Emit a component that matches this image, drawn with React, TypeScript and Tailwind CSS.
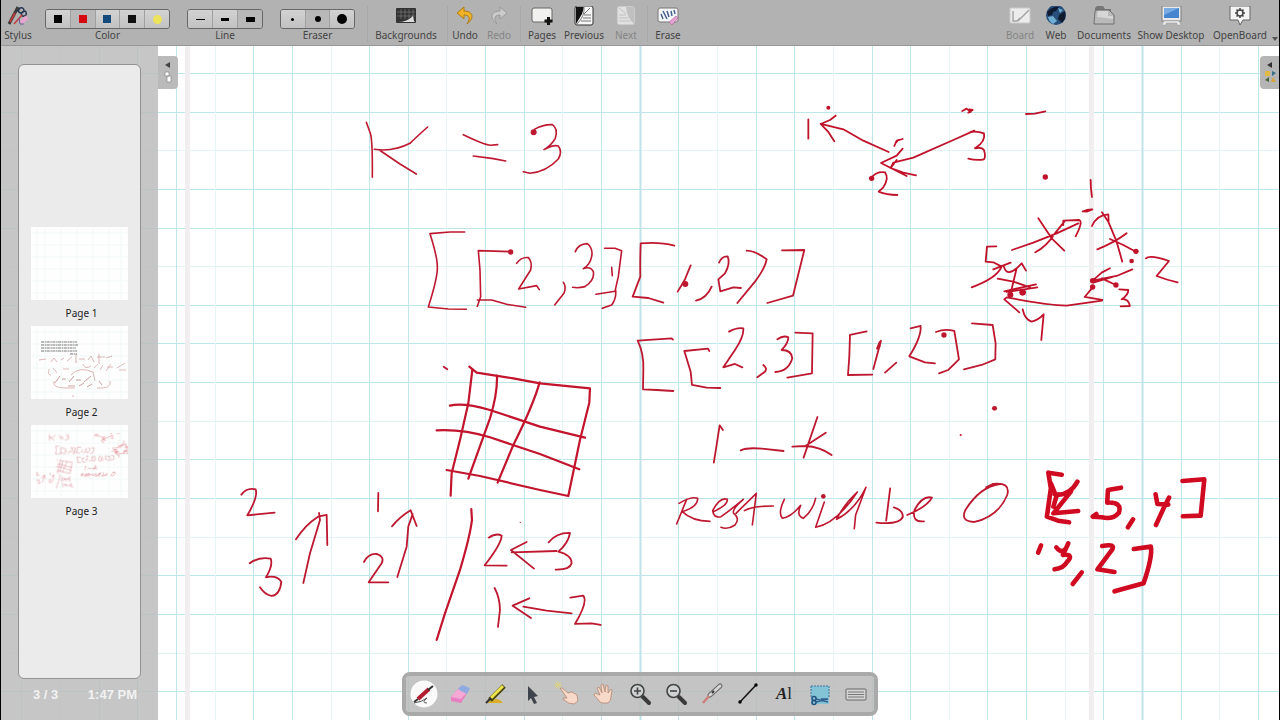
import React, { useState } from 'react';

interface StrokeGroup {
  transform: string;
  width: number;
  color: string;
  paths: string[];
  dots?: [number, number, number][];
}

const RED = '#bd1830';
const THIRD = 0.3333;

const ink: StrokeGroup[] = [
  {
    transform: `translate(340 90) scale(${THIRD})`,
    width: 1.6,
    color: RED,
    paths: [
      'M79 97L92 133Q98 160 97 262M263 111Q225 145 210 160Q160 186 103 178M118 180L180 222L229 252',
      'M370 134Q430 163 452 166L473 164M400 198L460 206L497 213',
      'M583 118Q610 103 637 104Q655 115 646 145Q635 165 612 179Q640 163 655 168Q668 185 655 207Q620 245 570 250L550 245',
      'M374 426L330 426L270 431Q292 500 292 530Q294 560 265 651L325 657L379 658',
      'M512 485L415 482L420 540L422 620L412 649M412 630L455 630L500 643L557 652',
      'M530 520Q545 500 565 503Q578 515 572 540L536 597L590 587L598 599M670 577Q680 590 672 610L644 645',
      'M706 485Q715 462 742 461Q760 475 755 500Q750 525 730 536Q752 528 760 545Q765 570 735 590Q715 595 698 592',
      'M794 475L825 475L845 482L835 560L825 604L768 613M827 600Q830 625 815 645L787 655M815 532L817 557',
    ],
    dots: [[581, 127, 9], [512, 486, 8]],
  },
  {
    transform: `translate(620 230) scale(${THIRD})`,
    width: 1.8,
    color: RED,
    paths: [
      'M163 47Q120 35 62 40Q60 100 61 140L38 200L85 204L130 218M212 106L194 150L173 185M275 170Q260 205 228 212',
      'M297 98Q305 78 323 79Q332 100 315 130L295 148L301 184L340 172L363 174',
      'M380 62Q405 62 440 88Q435 115 405 155L352 219M486 61L553 60L519 197L442 219',
      'M159 329L155 325L53 332Q72 370 70 420L69 478L110 480L160 483M268 363L264 356L193 363L212 425L216 465L260 473L301 474',
      'M327 305Q350 292 370 295Q372 320 345 360L310 412L345 402L367 412M430 405Q443 415 435 425L412 442',
      'M472 328Q490 315 505 322Q505 340 485 360Q515 360 517 385Q505 425 466 426M526 308L578 310L576 430L502 443',
      'M740 304L690 315L688 380L684 435L757 434M783 332L760 417M779 336L771 356L780 348M829 398L795 428',
      'M872 295L902 288Q905 320 868 379L915 397L945 400M948 306Q975 295 1003 303L1010 345L1017 388L985 420L957 430',
      'M1056 280L1118 285L1127 340L1126 388L1085 405L1032 418',
    ],
    dots: [[196, 162, 9], [972, 315, 8]],
  },
  {
    transform: `translate(780 90) scale(${THIRD})`,
    width: 1.8,
    color: '#c0122a',
    paths: [
      'M85 88L85 146M326 186L250 152L190 118L122 102L150 90L167 77M122 102L145 126L163 154',
      'M583 122L520 150L400 203L340 218L332 234L370 248L408 256M332 234L350 210M368 176L350 197L303 219L380 258M343 168L350 152L368 147M346 160L355 150',
      'M275 262Q290 243 315 247Q328 265 310 292L296 305Q320 315 352 315',
      'M572 126Q590 122 612 130Q618 155 585 175Q605 170 612 180Q618 200 612 208Q590 212 565 206',
      'M547 63L560 56L572 66L565 68L578 60L568 58M738 72L765 71L796 64M932 270L933 295L936 321M908 364L920 365L937 358L920 360L910 365',
      'M696 480L760 458L830 430L895 400M850 405L850 392L898 390Q910 395 887 439M775 385L815 445L853 482M766 487Q800 470 825 430L853 395',
      'M1027 515L1010 455L985 395L966 367M936 408Q950 375 985 373L986 393M952 478Q1000 460 1040 430M990 447L1030 465L1065 484',
      'M1098 505Q1110 493 1167 513L1130 558Q1160 570 1193 577',
      'M649 469L621 470L617 515L640 517L665 530Q650 565 575 592M640 538L692 518M672 530Q680 560 710 535L690 618M710 535L725 520L738 542',
      'M653 566L700 575L750 592M673 604L768 583M680 606L772 592M966 632L860 647Q800 645 680 622L673 628L718 667',
      'M967 630L914 621L940 590M1057 538L1010 558L938 572L965 548L990 535M965 565L1008 585M940 578L1000 560',
      'M1018 598L1045 600Q1045 615 1025 628Q1045 625 1050 648L1022 649M728 658Q735 690 755 695Q775 690 791 673L784 750',
    ],
    dots: [[145, 53, 6], [275, 265, 8], [796, 261, 8], [1068, 484, 8], [1055, 513, 7], [938, 572, 8], [938, 591, 8], [1008, 585, 8], [728, 607, 10], [691, 614, 9]],
  },
  {
    transform: `translate(230 350) scale(${THIRD})`,
    width: 1.8,
    color: RED,
    paths: [
      'M34 434Q50 412 77 418Q85 440 52 496L134 488M59 640Q85 620 122 626Q130 645 108 682Q140 675 154 695Q150 735 125 738Q105 735 90 712',
      'M220 699L240 610L270 510L267 489M198 568Q225 525 264 500L290 495L292 585M445 429L444 484',
      'M402 636Q415 610 440 612Q465 620 455 640L416 697L475 697M502 681L530 590L535 530L548 492M486 529Q510 500 542 481L560 528',
      'M776 563Q800 548 815 557Q815 580 764 646L830 647M980 603L845 607M890 576L843 600L912 656',
      'M956 577Q980 548 1020 549Q1015 580 985 605Q1025 615 1025 640Q1020 660 977 659',
      'M794 714Q810 745 810 780L804 831M1025 790L950 782L880 770M898 745L848 767L903 804M1021 743L1060 737Q1075 755 1035 822L1085 820L1112 825',
      'M641 50L652 58',
    ],
    dots: [[871, 517, 2]],
  },
  {
    transform: `translate(230 350) scale(${THIRD})`,
    width: 2.2,
    color: '#c2142c',
    paths: [
      'M718 50L740 68L850 85L930 100L1080 115L1078 158L1050 270L1015 438L930 420L750 378L650 360',
      'M727 60L715 160L690 270L665 370L662 437M801 77Q803 130 780 205L715 386M929 97Q910 165 850 285L803 398',
      'M660 167Q700 157 780 180L930 230L1065 263M620 241Q700 237 780 262L930 312L1048 358',
      'M724 477L726 510Q720 560 690 660L645 790L620 870',
    ],
  },
  {
    transform: `translate(665 470) scale(${THIRD})`,
    width: 1.6,
    color: RED,
    paths: [
      'M65 88L35 162M42 100Q80 78 98 85Q100 110 52 125Q80 153 135 154',
      'M145 125Q190 105 187 88Q165 80 143 122Q145 145 168 140Q190 125 235 88Q200 118 206 130Q226 145 210 165Q188 180 168 172',
      'M213 130L274 70L262 165M238 122Q262 108 325 108',
      'M358 88Q338 128 352 145Q380 140 407 106Q393 138 415 145Q445 120 452 85',
      'M478 96L452 172Q515 160 577 66Q535 105 515 148Q570 120 603 52L572 135L568 176',
    ],
    dots: [[475, 79, 7]],
  },
  {
    transform: `translate(660 400) scale(0.3636 ${THIRD})`,
    width: 1.8,
    color: RED,
    paths: [
      'M173 90L164 76L155 140L148 188M222 151Q240 142 280 146L340 153M433 51L395 173M456 98L400 138L364 140L400 138Q440 140 472 165',
      'M633 265L622 362M595 368Q660 375 668 350Q668 330 643 322M680 345Q735 320 748 293Q722 285 700 330Q692 368 726 364',
      'M935 252Q880 260 840 330Q825 365 865 366Q930 350 955 285Q965 245 915 252L897 262',
    ],
    dots: [[920, 25, 7], [827, 105, 3]],
  },
];

const boldInk: StrokeGroup = {
  transform: `translate(660 400) scale(0.3636 ${THIRD})`,
  width: 4.6,
  color: '#d00a20',
  paths: [
    'M1105 224L1068 218L1075 265L1064 350L1095 362L1125 367',
    'M1148 245Q1125 290 1085 283M1130 275L1082 340L1150 333M1075 250L1090 290L1082 320',
    'M1268 263L1232 270L1230 308Q1272 305 1262 338Q1245 360 1215 352L1190 350L1200 342M1301 358L1287 382',
    'M1363 283L1368 312L1398 314M1400 293L1385 325L1364 375M1437 243L1497 238L1487 347L1438 349',
    'M1048 436L1040 458M1090 442Q1110 470 1123 430L1108 465Q1140 462 1120 485Q1110 505 1085 508M1160 517L1135 552',
    'M1216 438Q1255 430 1243 450L1203 508L1250 516M1303 447L1350 440Q1355 470 1330 550L1250 574',
  ],
};

const Ink: React.FC<{ groups: StrokeGroup[]; strokeWidth?: number }> = ({ groups, strokeWidth }) => (
  <>
    {groups.map((g, i) => (
      <g key={i} transform={g.transform} stroke={g.color} strokeWidth={strokeWidth ?? g.width} fill="none" strokeLinecap="round" strokeLinejoin="round">
        {g.paths.map(d => (
          <path key={d} d={d} vectorEffect="non-scaling-stroke" />
        ))}
        {g.dots?.map(([x, y, r]) => (
          <circle key={`${x}-${y}`} cx={x} cy={y} r={r} fill={g.color} stroke="none" />
        ))}
      </g>
    ))}
  </>
);

const CELL = 38.64;
const columns = Array.from({ length: 60 }, (_, i) => i - 4);
const rows = Array.from({ length: 40 }, (_, i) => i);
const strongColumns = [12, 25, 38];
const faintColumns = [-3, 1, 4, 7, 10, 14, 17, 20, 23, 27];
const faintRows = [2, 5, 9, 12, 15];

const columnColor = (i: number) => {
  if (strongColumns.includes(i)) return '#bfe3e8';
  return faintColumns.includes(i) ? '#e6f5f6' : '#bfe7ea';
};

const Grid = () => (
  <g>
    {rows.map(i => {
      const y = Math.round(73 + i * CELL) + 0.5;
      return <line key={i} x1="0" x2="4000" y1={y} y2={y} stroke={faintRows.includes(i) ? '#e2f3f5' : '#bde6ea'} />;
    })}
    {columns.map(i => {
      const x = Math.round(176 + i * CELL) + 0.5;
      return <line key={i} y1="0" y2="3000" x1={x} x2={x} stroke={columnColor(i)} strokeWidth={strongColumns.includes(i) ? 2 : 1} />;
    })}
    <rect x="185" width="5" height="3000" fill="#f0eeef" />
    <rect x="1089" width="5" height="3000" fill="#f0eeef" />
  </g>
);

const icons: Record<string, React.ReactNode> = {
  Stylus: (
    <>
      <path d="M2 18L11 1" stroke="#3b3b3b" strokeWidth="3" />
      <path d="M3 16L8 7" stroke="#b43b3b" strokeWidth="2" />
      <path d="M13 2Q17 1 17 5Q14 9 11 5ZM17 5Q20 5 19 9Q15 12 14 7Z" fill="none" stroke="#24344f" strokeWidth="1.5" />
      <path d="M14 17L20 11" stroke="#e8a3ce" strokeWidth="4" />
      <path d="M7 18L15 9" stroke="#c23a3e" strokeWidth="1.5" />
      <path d="M12 12L13 18L17 18" fill="none" stroke="#665f98" />
    </>
  ),
  Backgrounds: (
    <>
      <rect x="1" y="2" width="20" height="15" rx="1" fill="#333" />
      <path d="M2 6H20M2 10H20M6 3V13M10 3V13M14 3V13M18 3V13" stroke="#777" strokeWidth=".7" />
      <path d="M3 16Q12 16 18 10L19 15L20 16Z" fill="#ddd" />
    </>
  ),
  Undo: <path d="M3 7L10 1V5C19 5 21 12 13 18C17 12 15 9 10 9V13Z" fill="#efb126" stroke="#ad7a14" strokeLinejoin="round" />,
  Redo: <path d="M19 7L12 1V5C3 5 1 12 9 18C5 12 7 9 12 9V13Z" fill="#cbcbcb" stroke="#999" strokeLinejoin="round" />,
  Pages: (
    <>
      <rect x="1" y="2" width="20" height="14" rx="2" fill="#f1f1ef" stroke="#666" />
      <path d="M17.500 11V19M13.500 15H21.500" stroke="#111" strokeWidth="3" />
    </>
  ),
  Previous: (
    <>
      <rect x="2" y="0" width="18" height="19" rx="2" fill="#f6f6f6" stroke="#333" />
      <path d="M3 1H11L9 8L3 18Z" fill="#111" />
      <path d="M11 1Q12 10 4 18M11 8L17 2M11 9L18 9M10 12H18M8 15H18" stroke="#777" fill="none" />
    </>
  ),
  Next: (
    <>
      <rect x="2" y="0" width="18" height="19" rx="2" fill="#e0e0e0" stroke="#b5b5b5" />
      <path d="M11 1H19V18Q12 12 11 1Z" fill="#c0c0c0" />
      <path d="M4 2L11 8M4 9H11M4 12H13M4 15H15" stroke="#c2c2c2" fill="none" />
    </>
  ),
  Erase: (
    <>
      <rect x="1" y="2" width="20" height="14" rx="2" fill="#f5f5f8" stroke="#777" />
      <path d="M4 8L6 13M6 5L10 13M10 5L12 11M14 5L15 10M17 4L18 8" stroke="#45618d" strokeWidth="1.500" />
      <path d="M12 16L19 10L21 12L15 19Z" fill="#e6a1d3" stroke="#a76698" strokeWidth=".6" />
    </>
  ),
  Board: (
    <>
      <rect x="1" y="2" width="20" height="15" rx="1" fill="#ececec" stroke="#c9c9c9" />
      <path d="M10 14L20 4M10 14L8 15L11 12M4 5V15H8" stroke="#a5a5a5" strokeWidth="1.500" fill="none" />
    </>
  ),
  Web: (
    <>
      <circle cx="11" cy="9" r="10" fill="#294e7a" />
      <path d="M2 6Q8 0 14 1L11 5L8 6L7 9L3 10ZM14 9L20 5Q22 12 17 17L13 13Z" fill="#101b30" />
      <path d="M3 11L8 10L12 15L8 18Q4 16 3 11ZM13 2L18 4L15 7Z" fill="#6faed2" />
    </>
  ),
  Documents: (
    <>
      <path d="M2 2L4 0H10L12 3H18V16H2Z" fill="#777" />
      <path d="M4 4H16L21 9V18H1L2 5Z" fill="#b9b9b9" stroke="#707070" />
      <path d="M5 5H15V10H20V13L4 11Z" fill="#d6d6d6" />
    </>
  ),
  'Show Desktop': (
    <>
      <rect x="2" y="0" width="19" height="15" fill="#e9e9e9" stroke="#7d7d7d" />
      <rect x="4" y="2" width="15" height="10" fill="#4686cf" />
      <path d="M4 2H19L4 9Z" fill="#79ace2" />
      <path d="M2 19L4 15H19L21 19H17V17H6V19Z" fill="#eee" stroke="#999" strokeWidth=".5" />
    </>
  ),
  OpenBoard: (
    <>
      <path d="M1 0H21V14H14L11 19L9 14H1Z" fill="#f4f4f4" stroke="#666" />
      <circle cx="11" cy="7" r="3" fill="none" stroke="#444" strokeWidth="1.500" />
      <path d="M11 2V4M11 10V12M6 7H8M14 7H16M7.500 3.500L9 5M13 9L14.500 10.500M14.500 3.500L13 5M9 9L7.500 10.500" stroke="#444" strokeWidth="1.500" />
    </>
  ),
};

const ToolbarButton: React.FC<{ label: string; className: string; disabled?: boolean }> = ({ label, className, disabled }) => (
  <button disabled={disabled} className={`flex shrink-0 flex-col items-center gap-[2px] whitespace-nowrap ${disabled ? 'text-[#858585]' : 'text-[#444]'} ${className}`}>
    <svg width="22" height="20" viewBox="0 0 22 20" aria-hidden="true">{icons[label]}</svg>
    <span>{label}</span>
  </button>
);

interface SegmentProps {
  label: string;
  options: { name: string; mark: string }[];
  initial: number;
  className: string;
}

const Segment: React.FC<SegmentProps> = ({ label, options, initial, className }) => {
  const [selected, setSelected] = useState(initial);
  return (
    <div role="group" aria-label={label} className={`flex shrink-0 flex-col items-center pt-[3px] text-[#444] ${className}`}>
      <div className="flex h-5 w-full overflow-hidden rounded-[3px] border border-[#676767]">
        {options.map((o, i) => (
          <button
            key={o.name}
            aria-label={o.name}
            aria-pressed={selected === i}
            onClick={() => setSelected(i)}
            className={`flex flex-1 items-center justify-center border-[#a0a0a0] ${i > 0 ? 'border-l' : ''} ${selected === i ? 'bg-[#b8b8b8]' : 'bg-linear-to-b from-[#d2d2d2] to-[#c2c2c2]'}`}
          >
            <span className={o.mark} />
          </button>
        ))}
      </div>
      <span className="-mt-px">{label}</span>
    </div>
  );
};

const colors = [
  { name: 'Black', mark: 'size-2 bg-black' },
  { name: 'Red', mark: 'size-2 bg-[#d60812]' },
  { name: 'Blue', mark: 'size-2 bg-[#174a7c]' },
  { name: 'Dark', mark: 'size-2 bg-[#111]' },
  { name: 'Yellow', mark: 'size-[9px] rounded-full bg-[#ede35b]' },
];
const lines = [
  { name: 'Thin line', mark: 'h-px w-[9px] bg-black' },
  { name: 'Medium line', mark: 'h-[3px] w-2 bg-black' },
  { name: 'Thick line', mark: 'h-[5px] w-[9px] bg-black' },
];
const erasers = [
  { name: 'Small eraser', mark: 'size-[3px] rounded-full bg-black' },
  { name: 'Medium eraser', mark: 'size-[6px] rounded-full bg-black' },
  { name: 'Large eraser', mark: 'size-[10px] rounded-full bg-black' },
];

const HandShape = () => (
  <path d="M7 19Q4 15 1 12L2 10L7 12L4 5L6 4L9 10L8 2L10 1L12 9L13 2L15 3L15 10L18 6L19 7L18 14Q18 18 15 20H9Z" fill="#f6d9c9" stroke="#b5866f" strokeWidth=".8" />
);

const Magnifier: React.FC<{ plus?: boolean }> = ({ plus }) => (
  <>
    <path d="M14 14L20 20" stroke="#3a3a3a" strokeWidth="4" strokeLinecap="round" />
    <circle cx="8.500" cy="8" r="6.500" fill="#cfd2d2" stroke="#444" strokeWidth="1.600" />
    <path d={plus ? 'M5 8H12M8.500 4.500V11.500' : 'M5 8H12'} stroke="#444" strokeWidth="1.600" />
  </>
);

const tools: { name: string; icon: React.ReactNode }[] = [
  {
    name: 'Pen',
    icon: (
      <>
        <circle cx="11" cy="11" r="13.500" fill="#fafafa" />
        <path d="M5 16L16 6" stroke="#b21d30" strokeWidth="4" />
        <path d="M1 19L5 16M15 7L20 3" stroke="#333" strokeWidth="2" />
        <path d="M1 20Q9 19 14 15Q8 20 14 20" fill="none" stroke="#555" />
      </>
    ),
  },
  {
    name: 'Eraser',
    icon: (
      <>
        <path d="M2 14L11 4L20 7L12 20L2 18Z" fill="#e87fc0" />
        <path d="M2 14L11 4L20 7L12 16Z" fill="#f5a8d5" />
        <path d="M9 6L13 2L21 5L18 11L12 8Z" fill="#8faae0" />
      </>
    ),
  },
  {
    name: 'Marker',
    icon: (
      <>
        <path d="M2 20Q12 12 18 20Z" fill="#d9af27" />
        <path d="M5 17L19 3" stroke="#45430f" strokeWidth="5" />
        <path d="M6 15L18 3" stroke="#eee34a" strokeWidth="3" />
        <path d="M1 20L6 15" stroke="#333" strokeWidth="2" />
      </>
    ),
  },
  { name: 'Select', icon: <path d="M7 3V18L10 15L13 21L16 20L13 14L17 13Z" fill="#3f444c" /> },
  {
    name: 'Interact',
    icon: (
      <>
        <path d="M3 5L5 5L11 10L15 9L20 12L21 18L17 21Q11 21 7 17L6 15L10 15Z" fill="#f6d9c9" stroke="#b5866f" strokeWidth=".8" />
        <path d="M1 -2V6M-3 2H5M-2 -1L4 5M4 -1L-2 5" stroke="#e0d670" strokeWidth=".8" />
      </>
    ),
  },
  { name: 'Scroll page', icon: <HandShape /> },
  { name: 'Zoom in', icon: <Magnifier plus /> },
  { name: 'Zoom out', icon: <Magnifier /> },
  {
    name: 'Laser pointer',
    icon: (
      <>
        <path d="M9 12L19 3" stroke="#666" strokeWidth="5" strokeLinecap="round" />
        <path d="M9 12L19 3" stroke="#d5d5d5" strokeWidth="3" strokeLinecap="round" />
        <path d="M2 20L8 13" stroke="#cc8178" strokeWidth="2.500" />
        <path d="M11 10L13 8" stroke="#333" strokeWidth="2" />
      </>
    ),
  },
  {
    name: 'Draw line',
    icon: (
      <>
        <path d="M3 19L19 2" stroke="#111" strokeWidth="1.500" />
        <circle cx="3" cy="19" r="1.700" />
        <circle cx="19" cy="2" r="1.700" />
      </>
    ),
  },
  { name: 'Write text', icon: null },
  {
    name: 'Capture',
    icon: (
      <>
        <rect x="2" y="3" width="18" height="18" fill="#83c3d5" />
        <path d="M2 3H20V15M2 3V15" fill="none" stroke="#3c78a0" strokeDasharray="2 1" />
        <path d="M7 16L19 19M7 19L19 16H12" stroke="#315f8e" strokeWidth="1.500" fill="none" />
        <circle cx="5" cy="15.500" r="2" fill="none" stroke="#25517e" strokeWidth="1.500" />
        <circle cx="5" cy="19.500" r="2" fill="none" stroke="#25517e" strokeWidth="1.500" />
      </>
    ),
  },
  {
    name: 'Virtual keyboard',
    icon: (
      <>
        <rect x="1" y="6" width="20" height="11" rx="1" fill="#d5d5d5" stroke="#666" />
        <path d="M3 9H19M3 11.500H19M3 14H19" stroke="#777" strokeWidth="1" />
      </>
    ),
  },
];

const BoardPalette = () => {
  const [tool, setTool] = useState('Pen');
  return (
    <nav aria-label="Board tools" className="absolute bottom-1 left-1/2 flex h-11 -translate-x-1/2 rounded-lg border-4 border-[#a9a9a9] bg-[#bababa]/85 bg-clip-padding">
      {tools.map(t => (
        <button key={t.name} aria-label={t.name} aria-pressed={tool === t.name} onClick={() => setTool(t.name)} className="flex w-9 items-center justify-center">
          {t.icon ? (
            <svg width="22" height="22" viewBox="0 0 22 22" className="overflow-visible" aria-hidden="true">{t.icon}</svg>
          ) : (
            <span className="flex items-center font-['Liberation_Serif',serif] text-[17px] leading-5 text-[#222]">
              <b className="italic">A</b>l
            </span>
          )}
        </button>
      ))}
    </nav>
  );
};

const ThumbGrid = () => (
  <path d="M0 6H97M0 18H97M0 30H97M0 42H97M0 54H97M0 66H97M6 0V73M14 0V73M30 0V73M46 0V73M62 0V73M78 0V73M90 0V73" stroke="#f2f9f8" strokeWidth="1" />
);

const pages = [
  { name: 'Page 1', content: null },
  {
    name: 'Page 2',
    content: (
      <g fill="none" strokeWidth=".7">
        <path d="M10 16H46M10 19H47M10 22H45M10 25H46M39 28H46" stroke="#777" strokeDasharray="3 .7 1.500 .5" strokeWidth="1.200" />
        <path d="M8 34L15 33M20 36L23 32L26 36M30 34L33 32M36 35L41 31M45 28V37M48 33H54M57 34L60 30L63 36M68 28V38M66 31H74M75 32L81 30" stroke="#c99" />
        <path d="M18 43Q16 49 20 49M22 42L26 47M32 43L38 43M52 38Q54 44 60 40M63 42L67 38M69 44L72 39M75 45L80 38M76 41H82M86 42L94 37M88 44H95" stroke="#d3a3a3" />
        <path d="M24 57L29 50M31 53H35M38 56L43 50M45 54H50M53 56L60 50M37 60H44M48 60L53 57M56 61L61 58M68 55L71 59" stroke="#b77" />
        <path d="M23 55Q21 62 34 62H44M40 49Q48 40 62 46L64 55M66 62Q81 63 79 55" stroke="#d09a9a" />
        <circle cx="42" cy="70" r=".6" fill="#b66" />
      </g>
    ),
  },
  {
    name: 'Page 3',
    content: (
      <g transform="translate(-20 -3) scale(0.1035)" opacity=".5">
        <Ink groups={ink} strokeWidth={0.5} />
      </g>
    ),
  },
];

const App: React.FC = () => (
  <div className="flex min-h-screen flex-col border-x border-black bg-white font-['Noto_Sans',sans-serif] text-[10px] leading-[14px]">
    <header className="flex h-[46px] items-start justify-between border-b border-[#979797] bg-[#b2b2b2] pt-[6px]">
      <div className="flex">
        <ToolbarButton label="Stylus" className="w-[34px]" />
        <Segment label="Color" options={colors} initial={1} className="ml-[10px] w-[125px]" />
        <Segment label="Line" options={lines} initial={2} className="ml-[17px] w-[76px]" />
        <Segment label="Eraser" options={erasers} initial={1} className="ml-[17px] w-[75px]" />
        <div className="ml-3 flex border-l border-black/5 pl-[6px]">
          <ToolbarButton label="Backgrounds" className="w-[64px]" />
        </div>
        <div className="ml-[9px] flex border-l border-black/5">
          <ToolbarButton label="Undo" className="w-[34px]" />
          <ToolbarButton label="Redo" className="w-[34px]" disabled />
        </div>
        <div className="ml-1 flex border-l border-black/5">
          <ToolbarButton label="Pages" className="w-[42px]" />
          <ToolbarButton label="Previous" className="w-[42px]" />
          <ToolbarButton label="Next" className="w-[42px]" disabled />
        </div>
        <div className="flex border-l border-black/5">
          <ToolbarButton label="Erase" className="w-[40px]" />
        </div>
      </div>
      <div className="flex items-end">
        <ToolbarButton label="Board" className="w-[36px]" disabled />
        <ToolbarButton label="Web" className="w-[36px]" />
        <ToolbarButton label="Documents" className="w-[60px]" />
        <ToolbarButton label="Show Desktop" className="w-[74px]" />
        <ToolbarButton label="OpenBoard" className="w-[64px]" />
        <svg width="7" height="4" viewBox="0 0 7 4" className="mb-px" aria-hidden="true"><path d="M0 0H6L3 4Z" fill="#555" /></svg>
      </div>
    </header>

    <main className="relative flex flex-1 overflow-hidden">
      <svg className="absolute inset-0 h-full w-full" role="img" aria-label="Whiteboard page with handwritten notes">
        <g transform="translate(-1 -46)">
          <Grid />
          <Ink groups={[...ink, boldInk]} />
        </g>
      </svg>

      <aside className="relative flex w-[157px] flex-col bg-[#bcbcbc]/85 pt-[18px] pr-[17px] pl-[17px]">
        <ul className="flex flex-1 flex-col items-center rounded-md border border-[#929292] bg-[#ebebeb] pt-[162px] text-[10px] leading-[26px] text-[#222]">
          {pages.map(p => (
            <li key={p.name} className="flex flex-col items-center">
              <svg width="97" height="73" viewBox="0 0 97 73" className="overflow-hidden bg-[#fdfefd]" aria-hidden="true">
                <ThumbGrid />
                {p.content}
              </svg>
              <span className="pl-1">{p.name}</span>
            </li>
          ))}
        </ul>
        <div className="flex h-[41px] justify-between pt-2 pr-1 pl-[15px] font-['Liberation_Sans',sans-serif] text-[13px] leading-4 font-bold whitespace-nowrap text-[#f2f2f2]">
          <span>3 / 3</span>
          <span>1:47 PM</span>
        </div>
      </aside>

      <button aria-label="Collapse page list" className="relative mt-[10px] flex h-[33px] w-5 flex-col items-center justify-center rounded-r bg-[#bababa]">
        <svg width="12" height="24" viewBox="0 0 12 24" aria-hidden="true">
          <path d="M3 4L8 1V7Z" fill="#444" />
          <path d="M3 11H7V15H3ZM5 15H9V21H5Z" fill="#fff" stroke="#888" strokeWidth=".7" />
        </svg>
      </button>
      <button aria-label="Expand library" className="relative mt-[10px] ml-auto flex h-[33px] w-[19px] flex-col items-center justify-center rounded-l bg-[#b5b5b5]">
        <svg width="14" height="24" viewBox="0 0 14 24" aria-hidden="true">
          <path d="M4 4L9 1V7Z" fill="#333" />
          <rect x="2" y="10" width="5" height="5" fill="#e2b944" />
          <path d="M9 10L13 12L9 15Z" fill="#346e88" />
          <path d="M2 19L6 16V21Z" fill="#49653a" />
          <path d="M8 21L10 16L13 21Z" fill="#d9a33a" />
        </svg>
      </button>

      <BoardPalette />
    </main>
  </div>
);

export default App;
